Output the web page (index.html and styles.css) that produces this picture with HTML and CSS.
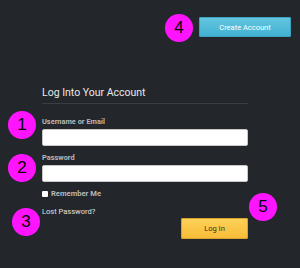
FILE: index.html
```html
<!DOCTYPE html>
<html>
<head>
<meta charset="utf-8">
<link rel="stylesheet" href="styles.css">
</head>
<body>
<div class="page">
  <div class="top">
    <button class="btn btn-create">Create Account</button>
  </div>
  <form class="login">
    <h2 class="title">Log Into Your Account</h2>
    <label class="lbl lbl-first">Username or Email</label>
    <input class="field" type="text">
    <label class="lbl">Password</label>
    <input class="field" type="password">
    <label class="remember"><span class="box"></span>Remember Me</label>
    <a class="lost">Lost Password?</a>
    <div class="actions">
      <button class="btn btn-login" type="button">Log In</button>
    </div>
  </form>
  <span class="mark m1">1</span>
  <span class="mark m2">2</span>
  <span class="mark m3">3</span>
  <span class="mark m4">4</span>
  <span class="mark m5">5</span>
</div>
</body>
</html>
```
FILE: styles.css
```css
html, body {
  margin: 0;
  padding: 0;
  background: #23262b;
}
.page {
  position: relative;
  width: 300px;
  height: 268px;
  overflow: hidden;
  font-family: Roboto, "Liberation Sans", sans-serif;
}
.top {
  display: flex;
  justify-content: flex-end;
  padding: 17px 9px 0 0;
}
.btn {
  border: none;
  border-radius: 2px;
  font-family: Roboto, "Liberation Sans", sans-serif;
  padding: 0;
  cursor: pointer;
}
.btn-create {
  width: 92px;
  height: 20px;
  font-size: 7.5px;
  color: #ffffff;
  background: linear-gradient(#66c6e0, #40b0d1);
  box-shadow: inset 0 0 0 1px #3aa3c2;
}
.login {
  display: flex;
  flex-direction: column;
  align-items: flex-start;
  width: 206px;
  margin: 50px 0 0 42px;
}
.title {
  margin: 0;
  align-self: stretch;
  font-size: 10.5px;
  font-weight: 400;
  color: #e8e8e8;
  line-height: 12px;
  padding-bottom: 4px;
  border-bottom: 1px solid #3a3d43;
}
.lbl {
  font-size: 7.4px;
  font-weight: 700;
  color: #b8b8b8;
  line-height: 8px;
  margin-top: 8px;
  margin-bottom: 3px;
}
.lbl-first {
  margin-top: 14px;
}
.field {
  box-sizing: border-box;
  align-self: stretch;
  height: 17px;
  margin: 0;
  border: 1px solid #c8c8c8;
  border-radius: 2px;
  background: #ffffff;
}
.remember {
  display: flex;
  align-items: center;
  gap: 3px;
  margin-top: 8px;
  font-size: 7.6px;
  font-weight: 700;
  color: #b8b8b8;
  line-height: 8px;
}
.box {
  width: 6px;
  height: 6px;
  background: #ffffff;
  border-radius: 1px;
}
.lost {
  margin-top: 9px;
  font-size: 7.5px;
  color: #e0e0e0;
  line-height: 9px;
}
.actions {
  align-self: stretch;
  display: flex;
  justify-content: flex-end;
  margin-top: 2px;
}
.btn-login {
  width: 67px;
  height: 21px;
  font-size: 7.5px;
  color: #3a3320;
  background: linear-gradient(#ffd25a, #f8bb37);
  box-shadow: inset 0 0 0 1px #d9a12e;
}
.mark {
  position: absolute;
  width: 28px;
  height: 28px;
  border-radius: 50%;
  background: #ff14ff;
  color: #000000;
  font-family: "Liberation Sans", Arial, sans-serif;
  font-size: 17px;
  line-height: 28px;
  text-align: center;
}
.m1 { left: 8px; top: 111px; }
.m2 { left: 8px; top: 154px; }
.m3 { left: 12px; top: 208px; }
.m4 { left: 165px; top: 14px; }
.m5 { left: 249px; top: 193px; }
```
